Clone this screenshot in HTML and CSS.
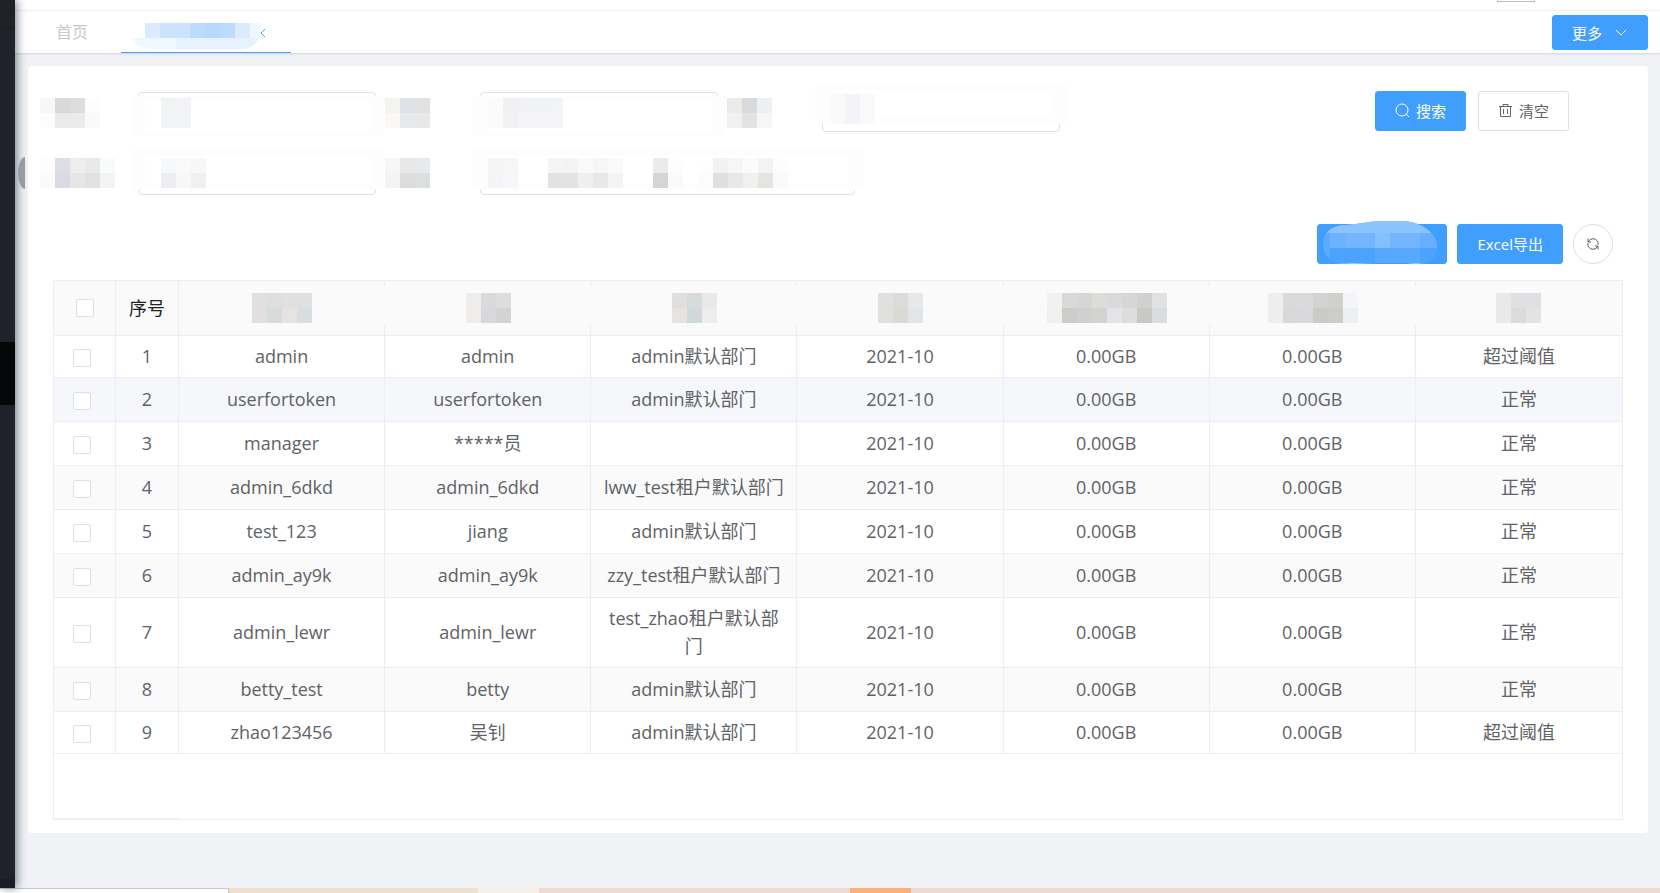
FILE: index.html
```
<!DOCTYPE html>
<html lang="zh-CN">
  <head>
    <meta charset="utf-8">
    <title>首页</title>
    <link rel="stylesheet" href="styles.css">
  </head>
  <body>
    <div class="app">
      <aside class="sidebar">
        <div class="sidebar-top"></div>
        <div class="sidebar-active"></div>
        <div class="sidebar-bottom"></div>
      </aside>
      <div class="handle"></div>

      <div class="main">
        <div class="topbar"><span class="topbar-box"></span></div>
        <nav class="tabs">
          <a class="tab" href="#">首页</a>
          <a class="tab active" href="#" aria-label="当前">
            <svg width="140" height="30" viewBox="0 0 140 30">
              <path fill="#eff7ff" d="M0 19h45v11H22C11 30 4 26 0 19z"/>
              <path fill="#e6f3ff" d="M45 19h83c-4 8-10 11-18 11H45z"/>
              <path fill="#f1f6ff" d="M119 4h10q3 8-1 15h-9z"/>
              <path fill="#dde9fe" d="M14 4h15v15H14z"/>
              <path fill="#cce2fe" d="M29 4h30v15H29z"/>
              <path fill="#bddbff" d="M59 4h45v15H59z"/>
              <path fill="#b8d8ff" d="M74 4h15v15H74z"/>
              <path fill="#dbebff" d="M104 4h15v15h-15z"/>
              <path fill="none" stroke="#409eff" d="M134 10l-4 4 4 4"/>
            </svg>
          </a>
          <button class="btn primary more" type="button">更多
            <svg width="14" height="14" viewBox="0 0 14 14"><path d="M2 5l5 5 5-5"/></svg>
          </button>
        </nav>

        <div class="card">
          <form class="search">
            <div class="fields">
              <div class="row">
                <label for="f1"><span class="mosaic" data-colors="f8f7f5 d8d9db dddddd fdfdfd|fbfcfb e9eaec ecebea f8f9fb"></span></label>
                <div class="field">
                  <input id="f1" type="text">
                  <div class="smudge low"><span class="mosaic" data-colors="- f2f3f5 f3f4f6|- f2f3f5 f3f4f6"></span></div>
                </div>
                <label class="next" for="f2"><span class="mosaic" data-colors="f5f3f1 dee1e5 e1e1e1|f9f8f5 e8e9eb e8e8e8"></span></label>
                <div class="field">
                  <input id="f2" type="text">
                  <div class="smudge low"><span class="mosaic" data-colors="fafbfa f1f1f3 f1f2f4 f1f2f4 f2f3f5|fbfbfb f2f2f3 f4f5f8 f5f5f7 f5f5f7"></span></div>
                </div>
                <label class="next" for="f3"><span class="mosaic" data-colors="ecebe9 d9dade eeeff2|f1f1f1 e1e3e5 f6f6f6"></span></label>
                <div class="field">
                  <input id="f3" type="text">
                  <div class="smudge high"><span class="mosaic" data-colors="fafafa f3f4f7 fafafa|fafafa f3f4f7 fafafa"></span></div>
                </div>
              </div>
              <div class="row">
                <label for="f4"><span class="mosaic" data-colors="fefdfb dddee1 ededed e8e9eb f8fbfa|fbfaf8 dadbe0 e6e6e6 e1e1e2 f3f3f3"></span></label>
                <div class="field">
                  <input id="f4" type="text">
                  <div class="smudge high"><span class="mosaic" data-colors="- f7f8fa f9faf9 f7f7f7|- edeef2 f6f7f9 eff0f1"></span></div>
                </div>
                <label class="next" for="f5"><span class="mosaic" data-colors="f7f7f7 e8e8e8 e8e9ea|f3f3f3 dedcdc dbdfe0"></span></label>
                <div class="field wide">
                  <input id="f5" type="text">
                  <div class="smudge high"><span class="mosaic" data-colors="f4f5f7 f6f6f7 - - f5f5f5 f2f4f4 f9f9f9 f6f6f6 fafafa - - ecebe9 fdfdfd - fefefe f2f2f2 f5f7f7 fbfbfb f3f3f3 fcfefe|f3f4f6 f6f7fa - - e2e2e2 e1e3e5 efefef e8e8e8 f2f5f4 - - d7d4d5 fafafa - fefcfa dfdfdf e6e8ea f0f0f0 e6e4e1 f7f9fb"></span></div>
                </div>
              </div>
            </div>
            <div class="actions">
              <button class="btn primary" type="button">
                <svg width="15" height="15" viewBox="0 0 15 15"><circle cx="7" cy="7" r="6"/><path d="M11.200 11.200l2.800 2.800"/></svg>搜索
              </button>
              <button class="btn" type="reset">
                <svg width="15" height="15" viewBox="0 0 15 15"><path d="M1 3.500h13M5 3.500v-2h5v2M2.500 3.500v10h10v-10M5.500 6v5M9.500 6v5"/></svg>清空
              </button>
            </div>
          </form>

          <div class="toolbar">
            <button class="btn primary hidden-name" type="button" aria-label="导出">
              <svg width="130" height="46" viewBox="0 0 130 46">
                <clipPath id="blob"><path d="M6 23C6 11 14 5 28 4C44 3 52 0 66 0H84C104 0 120 12 120 25C120 38 112 44 94 44H34C16 44 6 36 6 23z"/></clipPath>
                <g clip-path="url(#blob)">
                  <path fill="#5cabff" d="M0 0h130v42H0z"/>
                  <path fill="#8bc3ff" d="M0 0h130v12H0z"/>
                  <path fill="#6bb2ff" d="M13 12h15v15H13z"/>
                  <path fill="#73b6ff" d="M28 12h75v15H28z"/>
                  <path fill="#84c0ff" d="M58 12h15v15H58z"/>
                  <path fill="#66afff" d="M103 12h17v15h-17z"/>
                  <path fill="#4ba2ff" d="M13 27h107v15H13z"/>
                  <path fill="#57a8ff" d="M58 27h45v15H58z"/>
                </g>
                <path fill="#f2f8ff" d="M16 43q20-1 40 0q-20 3-40 0zM90 43q9-1 18 0q-9 2-18 0z"/>
              </svg>
            </button>
            <button class="btn primary" type="button">Excel导出</button>
            <button class="btn circle" type="button" aria-label="刷新">
              <svg width="14" height="14" viewBox="0 0 14 14"><path d="M2 1.500v3.500h3M2.200 5A5.300 5.300 0 0 1 7 1.700a5.300 5.300 0 0 1 5.200 6.200M12 12.500V9H9M11.800 9A5.300 5.300 0 0 1 7 12.300a5.300 5.300 0 0 1-5.200-6.200"/></svg>
            </button>
          </div>

          <div class="table-box">
            <table>
              <colgroup>
                <col class="c-check"><col class="c-no"><col><col><col><col><col><col><col>
              </colgroup>
              <thead>
                <tr>
                  <th><input type="checkbox" aria-label="全选"></th>
                  <th>序号</th>
                  <th class="masked"><span class="mosaic" data-colors="e1dfdf dedede e0e0df dfe0e2|e1dfdf d8dbdb e5e4e3 d8dde0"></span></th>
                  <th class="masked"><span class="mosaic" data-colors="eeedec dad9dc dcdddd|eeedec d8d8db d3d3d1"></span></th>
                  <th class="masked"><span class="mosaic" data-colors="dfdfe0 d6dbdc e9e9e9|e8e3e0 d0d9d9 efecf0"></span></th>
                  <th class="masked"><span class="mosaic" data-colors="e0e0df dbdbd9 e6e9e8|e0e0df d9dad5 e1e5e7"></span></th>
                  <th class="masked"><span class="mosaic" data-colors="f1f1f0 dad9d8 d5d7d7 dddcd8 dadadb d5d7d7 d0d0d0 dfe2e1|f0f0ef cdccca cfd1d0 d5d3d1 e3e4e7 dddddd cac8c5 d9dde0"></span></th>
                  <th class="masked"><span class="mosaic" data-colors="eeeeee dbdad9 dad9dc d3d3d1 d0d0cd f4f5f8|eeeeee d7d9d8 d9d8dc c9cbc7 cdcdc8 edeff5"></span></th>
                  <th><span class="mosaic" data-colors="e8e9e9 e2dfe1 dfe0e3|e8eae9 dbdbdc e2e3e2"></span></th>
                </tr>
              </thead>
              <tbody id="rows"></tbody>
            </table>
          </div>
        </div>
      </div>
    </div>

    <div class="strip">
      <span class="s1"></span><span class="s2"></span><span class="s3"></span><span class="s4"></span><span class="s5"></span><span class="s6"></span>
    </div>

    <script>
      const list = [
        ['admin', 'admin', 'admin默认部门', '超过阈值'],
        ['userfortoken', 'userfortoken', 'admin默认部门', '正常'],
        ['manager', '*****员', '', '正常'],
        ['admin_6dkd', 'admin_6dkd', 'lww_test租户默认部门', '正常'],
        ['test_123', 'jiang', 'admin默认部门', '正常'],
        ['admin_ay9k', 'admin_ay9k', 'zzy_test租户默认部门', '正常'],
        ['admin_lewr', 'admin_lewr', 'test_zhao租户默认部门', '正常'],
        ['betty_test', 'betty', 'admin默认部门', '正常'],
        ['zhao123456', '吴钊', 'admin默认部门', '超过阈值']
      ];

      document.getElementById('rows').innerHTML = list.map((r, i) => `
        <tr>
          <td class="check"><input type="checkbox" aria-label="选择 ${i + 1}"></td>
          <td>${i + 1}</td>
          <td>${r[0]}</td>
          <td>${r[1]}</td>
          <td>${r[2]}</td>
          <td>2021-10</td>
          <td>0.00GB</td>
          <td>0.00GB</td>
          <td>${r[3]}</td>
        </tr>`).join('');

      // 15px squares, rows split by |, "-" leaves a square empty
      document.querySelectorAll('.mosaic').forEach(el => {
        const lines = el.dataset.colors.split('|').map(l => l.split(' '));
        const w = lines[0].length * 15;
        let rects = '';
        lines.forEach((line, y) => line.forEach((c, x) => {
          if (c !== '-') rects += `<rect x="${x * 15}" y="${y * 15}" width="15" height="15" fill="#${c}"/>`;
        }));
        el.innerHTML = `<svg width="${w}" height="30" shape-rendering="crispEdges">${rects}</svg>`;
      });
    </script>
  </body>
</html>
```
FILE: styles.css
```
* { box-sizing: border-box; }

body {
  margin: 0;
  min-height: 100vh;
  display: flex;
  flex-direction: column;
  font-family: "Open Sans", "Noto Sans CJK SC", sans-serif;
  font-size: 18px;
  line-height: 28px;
  color: #606266;
  background: #f0f2f5;
}

svg { display: block; }

.app {
  flex: 1;
  display: flex;
  position: relative;
}

.sidebar {
  width: 15px;
  flex-shrink: 0;
  display: flex;
  flex-direction: column;
  background: #20222a;
  box-shadow: 2px 0 10px rgba(0, 21, 41, 0.5);
  z-index: 1;
}
.sidebar-top { height: 28px; border-bottom: 1px solid #1a1c22; }
.sidebar-active { height: 63px; margin-top: 314px; background: #050607; }
.sidebar-bottom { height: 9px; margin-top: auto; background: #1b1d25; }

.handle {
  position: absolute;
  left: 18px;
  top: 157px;
  width: 7px;
  height: 32px;
  border-radius: 7px 0 0 7px / 16px 0 0 16px;
  background: #989ba2;
  z-index: 2;
}

.main { flex: 1; min-width: 0; }

.topbar {
  height: 11px;
  display: flex;
  justify-content: flex-end;
  align-items: flex-start;
  padding-right: 125px;
  background: #fff;
  border-bottom: 1px solid #f4f4f5;
}
.topbar-box { width: 38px; height: 2px; border: 1px solid #c0c0c0; border-top: none; }

.tabs {
  height: 42px;
  display: flex;
  align-items: center;
  padding: 0 12px 0 41px;
  background: #fff;
  box-shadow: 0 1px 2px rgba(0, 0, 0, 0.12);
}
.tab {
  height: 42px;
  line-height: 42px;
  font-size: 16px;
  color: #c8c9cc;
  text-decoration: none;
}
.tab.active {
  width: 170px;
  margin-left: 33px;
  padding: 8px 0 0 10px;
  border-bottom: 1px solid #409eff;
}

.btn {
  height: 40px;
  display: inline-flex;
  align-items: center;
  justify-content: center;
  gap: 6px;
  padding: 0 19px 2px;
  border: 1px solid #dcdfe6;
  border-radius: 3px;
  background: #fff;
  color: #606266;
  font-family: inherit;
  font-size: 15px;
  white-space: nowrap;
}
.btn svg { fill: none; stroke: currentColor; }
.btn.primary { background: #409eff; border-color: #409eff; color: #fff; }
.btn.more { height: 35px; margin-left: auto; padding-bottom: 0; gap: 12px; }
.btn.circle { width: 40px; padding: 0; border-radius: 50%; }
.btn.hidden-name { width: 130px; padding: 0; align-items: flex-start; }
.btn.hidden-name svg { flex-shrink: 0; margin-top: -4px; stroke: none; }

.card {
  margin: 13px 12px 55px 13px;
  padding: 25px 25px 13px;
  background: #fff;
  border-radius: 4px;
}

.search {
  display: flex;
  justify-content: space-between;
  align-items: flex-start;
}
.fields {
  display: flex;
  flex-direction: column;
  gap: 23px;
  margin-left: -13px;
  padding-top: 1px;
}
.row { display: flex; }
.row label { width: 98px; padding-top: 6px; }
.row:last-child label { padding-top: 3px; }
.row label.next { width: 104px; padding-left: 9px; }
.field { position: relative; width: 238px; }
.field.wide { width: 375px; }
.field input {
  display: block;
  width: 100%;
  height: 40px;
  padding: 0 15px;
  border: 1px solid #dcdfe6;
  border-radius: 4px;
  font: inherit;
}

.mosaic { display: inline-block; vertical-align: top; line-height: 0; }

/* blurred band laid over an input */
.smudge {
  position: absolute;
  left: -7px;
  right: -8px;
  height: 40px;
  background: linear-gradient(#fff, #fff) 14px 50% / calc(100% - 28px) 28px no-repeat #fdfdfd;
  pointer-events: none;
}
.smudge .mosaic { margin-left: 15px; }
.smudge.low { top: 4px; padding-top: 2px; }
.smudge.high { top: -5px; padding-top: 8px; }
.row:first-child .smudge.high { top: -8px; padding-top: 10px; }

.actions { display: flex; gap: 12px; margin-right: 54px; }

.toolbar {
  display: flex;
  justify-content: flex-end;
  gap: 10px;
  margin: 29px 10px 16px 0;
}

.table-box {
  position: relative;
  padding-bottom: 65px;
  border: 1px solid #ebeef5;
}
.table-box::after {
  content: "";
  position: absolute;
  left: 0;
  bottom: 0;
  width: 125px;
  height: 1px;
  background: #ebeef5;
}

table { width: 100%; table-layout: fixed; border-collapse: separate; border-spacing: 0; }
.c-check { width: 62px; }
.c-no { width: 63px; }

th, td {
  padding: 6px 10px 7px;
  border-right: 1px solid #ebeef5;
  border-bottom: 1px solid #ebeef5;
  text-align: center;
  vertical-align: middle;
}
th:last-child, td:last-child { border-right: none; }
th { height: 55px; padding: 0; background: #fafafa; color: #222; font-weight: normal; }
th.masked {
  border-right: none;
  background: linear-gradient(#ebeef5 5px, #fafafa 5px, #fafafa 44px, #ebeef5 44px) right / 1px 100% no-repeat #fafafa;
}
td { height: 44px; }
tbody tr:first-child td, tbody tr:last-child td { height: 42px; }
tbody tr:nth-child(even) { background: #fafafa; }
tbody tr:nth-child(2) { background: #f5f7fa; }
td.check { padding: 6px 16px 4px 10px; }

input[type="checkbox"] {
  appearance: none;
  display: block;
  width: 18px;
  height: 18px;
  margin: 0 auto;
  border: 1px solid #dcdfe6;
  border-radius: 2px;
  background: #fff;
}

.strip { display: flex; height: 5px; }
.s1 { width: 13.800%; background: #fff; border: 1px solid #c8c8c8; border-width: 1px 1px 0 0; }
.s2 { width: 15%; background: #efdfcd; }
.s3 { width: 3.700%; background: #f7f0e7; }
.s4 { width: 18.700%; background: #eedccf; }
.s5 { width: 3.700%; background: #fbb077; }
.s6 { flex: 1; background: #eed9d0; }
```
